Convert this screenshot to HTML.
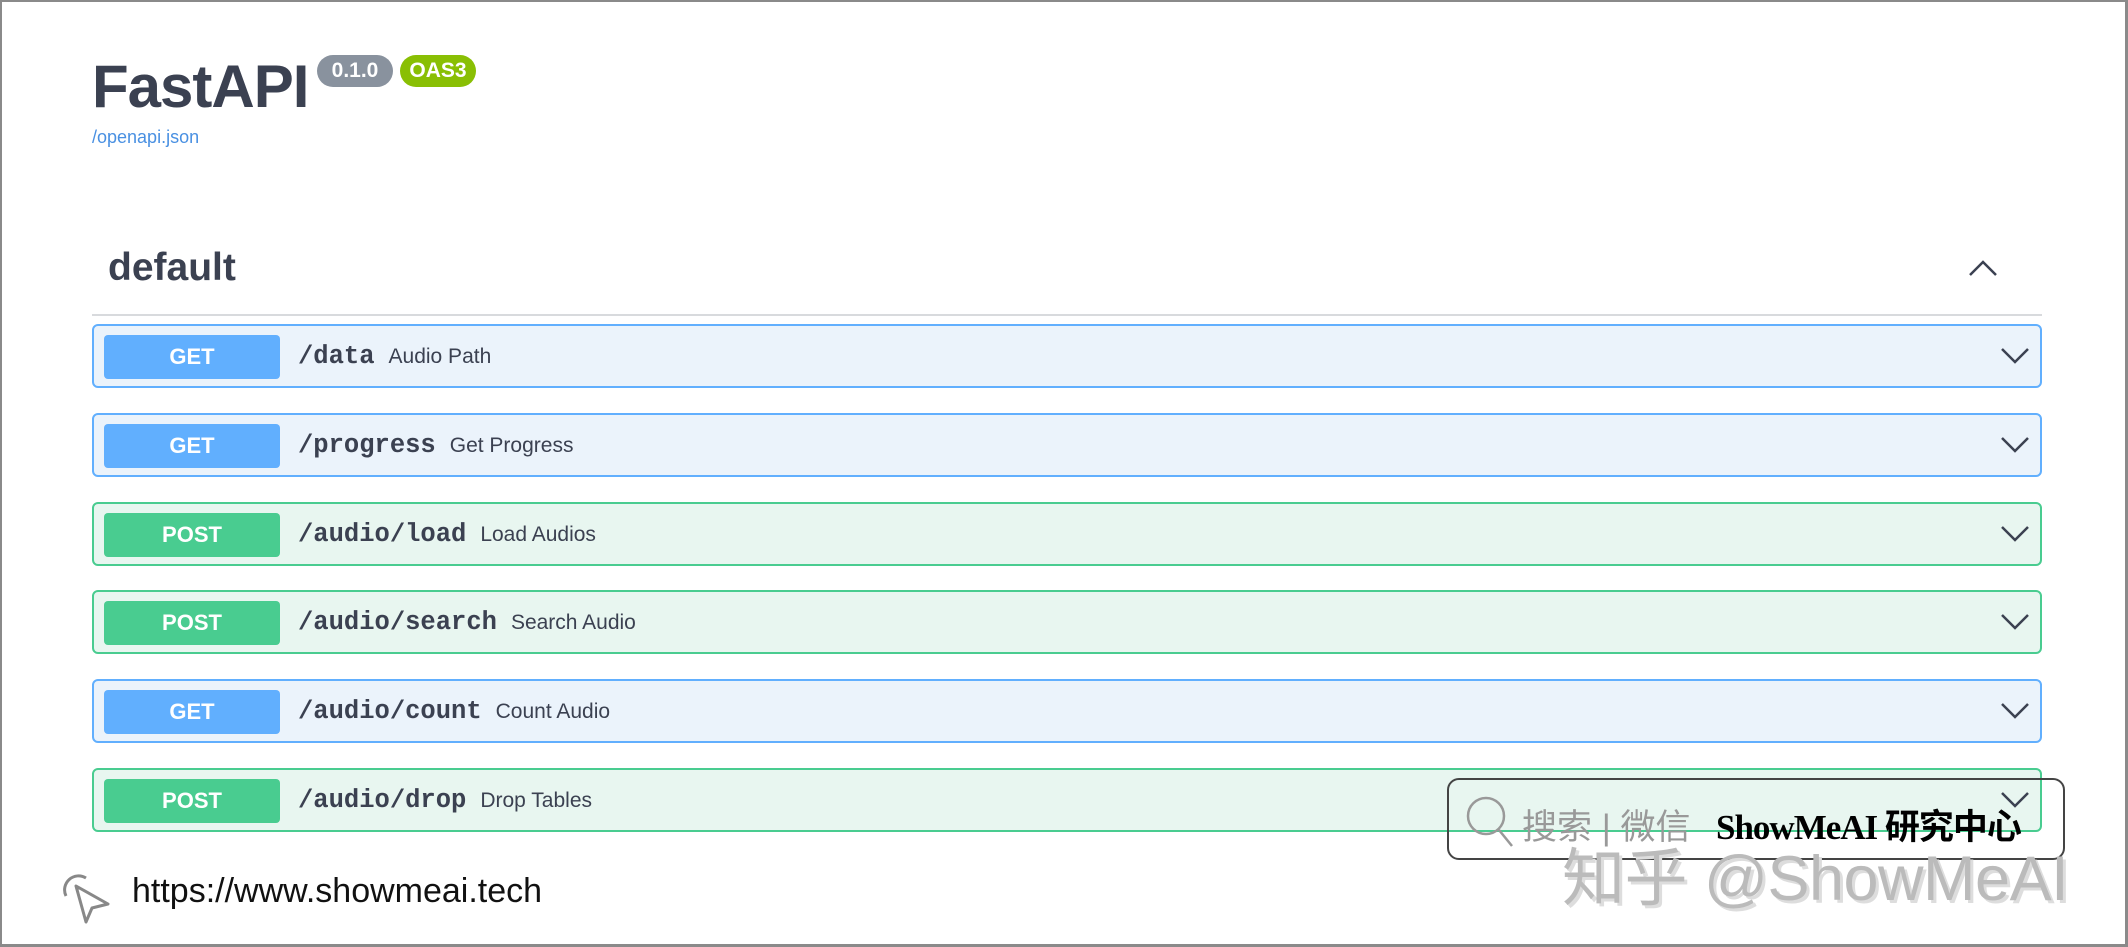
<!DOCTYPE html>
<html><head><meta charset="utf-8"><style>
*{margin:0;padding:0;box-sizing:border-box}
body{width:2128px;height:947px;background:#fff;position:relative;overflow:hidden;font-family:"Liberation Sans",sans-serif;color:#3b4151}
.frame{position:absolute;left:0;top:0;width:2128px;height:947px;border:2px solid #8a8a8a;border-right-width:3px;border-bottom-width:3px}
.title{position:absolute;left:92px;top:52px;font-size:60px;font-weight:bold;letter-spacing:-1px}
.badge{position:absolute;top:55px;height:32px;border-radius:16px;color:#fff;font-weight:bold;font-size:21px;line-height:32px;text-align:center}
.link{position:absolute;left:92px;top:127px;font-size:18px;color:#4990e2}
.def{position:absolute;left:108px;top:246px;font-size:39px;font-weight:bold}
.hr{position:absolute;left:92px;top:314px;width:1950px;height:2px;background:#d8dadd}
.row{position:absolute;left:92px;width:1950px;height:64px;border:2px solid;border-radius:6px}
.get{background:#ebf3fb;border-color:#61affe}
.post{background:#e8f6f0;border-color:#49cc90}
.btn{position:absolute;left:10px;top:9px;width:176px;height:44px;border-radius:4px;color:#fff;font-weight:bold;font-size:22px;line-height:44px;text-align:center}
.get .btn{background:#61affe}.post .btn{background:#49cc90}
.path{position:absolute;left:204px;top:16px;font-family:"Liberation Mono",monospace;font-weight:bold;font-size:25.5px}
.path span{font-family:"Liberation Sans",sans-serif;font-weight:normal;font-size:21px;margin-left:14px}
.chev{position:absolute;right:10px;top:20px}
</style></head><body>
<div class="title">FastAPI</div>
<div class="badge" style="left:317px;width:76px;background:#89929e">0.1.0</div>
<div class="badge" style="left:400px;width:76px;background:#89bf04">OAS3</div>
<div class="link">/openapi.json</div>
<div class="def">default</div>
<svg style="position:absolute;left:1968px;top:258px" width="30" height="20"><path d="M2 17 L15 4 L28 17" stroke="#3b4151" stroke-width="2.5" fill="none"/></svg>
<div class="hr"></div>

<div class="row get" style="top:324px"><div class="btn">GET</div><div class="path">/data<span>Audio Path</span></div><svg class="chev" width="30" height="20"><path d="M2 3 L15 16 L28 3" stroke="#3b4151" stroke-width="2.5" fill="none"/></svg></div>
<div class="row get" style="top:413px"><div class="btn">GET</div><div class="path">/progress<span>Get Progress</span></div><svg class="chev" width="30" height="20"><path d="M2 3 L15 16 L28 3" stroke="#3b4151" stroke-width="2.5" fill="none"/></svg></div>
<div class="row post" style="top:502px"><div class="btn">POST</div><div class="path">/audio/load<span>Load Audios</span></div><svg class="chev" width="30" height="20"><path d="M2 3 L15 16 L28 3" stroke="#3b4151" stroke-width="2.5" fill="none"/></svg></div>
<div class="row post" style="top:590px"><div class="btn">POST</div><div class="path">/audio/search<span>Search Audio</span></div><svg class="chev" width="30" height="20"><path d="M2 3 L15 16 L28 3" stroke="#3b4151" stroke-width="2.5" fill="none"/></svg></div>
<div class="row get" style="top:679px"><div class="btn">GET</div><div class="path">/audio/count<span>Count Audio</span></div><svg class="chev" width="30" height="20"><path d="M2 3 L15 16 L28 3" stroke="#3b4151" stroke-width="2.5" fill="none"/></svg></div>
<div class="row post" style="top:768px"><div class="btn">POST</div><div class="path">/audio/drop<span>Drop Tables</span></div><svg class="chev" width="30" height="20"><path d="M2 3 L15 16 L28 3" stroke="#3b4151" stroke-width="2.5" fill="none"/></svg></div>

<svg style="position:absolute;left:56px;top:870px" width="56" height="56"><path d="M10 26 A14 14 0 0 1 30 8" stroke="#888" stroke-width="3" fill="none"/><path d="M20 16 L52 34 L36 38 L30 52 Z" stroke="#888" stroke-width="3" fill="none" stroke-linejoin="round"/></svg>
<div style="position:absolute;left:132px;top:872px;font-size:34px;color:#111">https://www.showmeai.tech</div>

<div style="position:absolute;left:1447px;top:778px;width:618px;height:82px;border:2px solid #444;border-radius:12px"></div>
<svg style="position:absolute;left:1464px;top:794px" width="50" height="54"><circle cx="22" cy="22" r="18" stroke="#999" stroke-width="2.5" fill="none"/><path d="M35 36 L48 52" stroke="#999" stroke-width="2.5"/></svg>
<div style="position:absolute;left:1522px;top:799px;font-size:35px;color:#999;font-family:'Liberation Sans','Noto Sans CJK SC',sans-serif">搜索 | 微信</div>
<div style="position:absolute;left:1716px;top:799px;font-size:35px;color:#000;font-weight:bold;font-family:'Liberation Serif','Noto Sans CJK SC',serif;letter-spacing:-1px">ShowMeAI 研究中心</div>
<div style="position:absolute;left:1562px;top:828px;font-size:63px;color:#bbb;font-family:'Liberation Sans','Noto Sans CJK SC',sans-serif;text-shadow:3px 3px 0 #ddd;white-space:nowrap;letter-spacing:-0.5px">知乎 @ShowMeAI</div>
<div class="frame"></div>
</body></html>
